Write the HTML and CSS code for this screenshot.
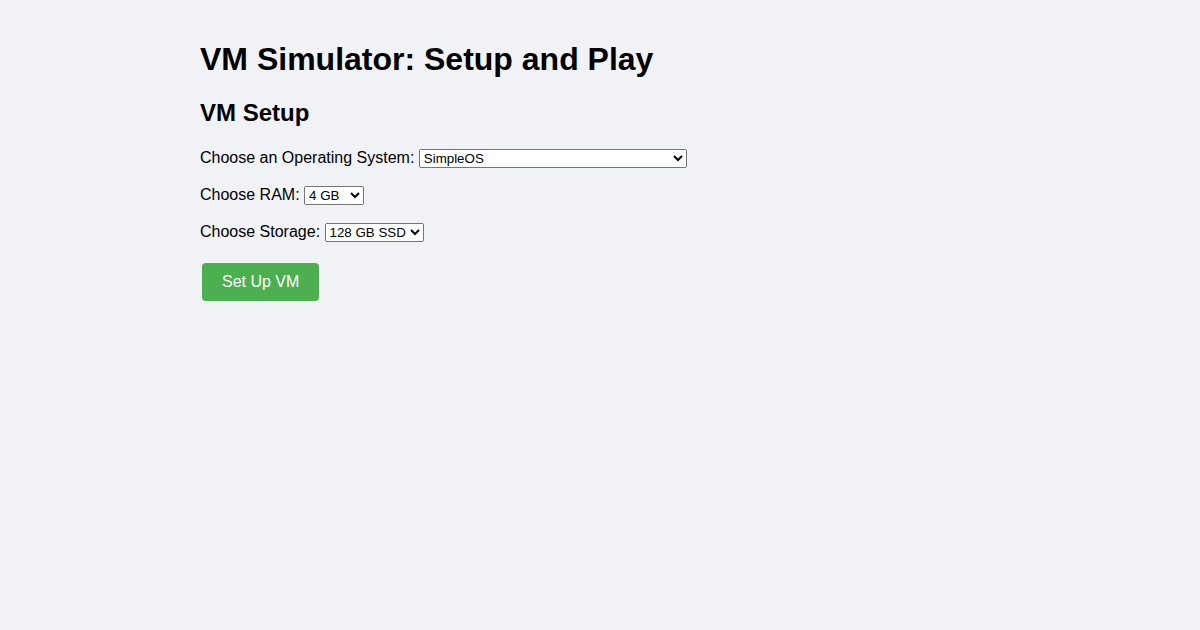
FILE: index.html
```html
<!DOCTYPE html>
<html lang="en">

<head>
    <meta charset="UTF-8">
    <meta name="viewport" content="width=device-width, initial-scale=1.0">
    <title>VM Simulator</title>
    <link rel="stylesheet" href="styles.css">
</head>

<body>
    <div class="container">
        <h1>VM Simulator: Setup and Play</h1>

        <div id="setup">
            <h2>VM Setup</h2>
            <div class="form-row">
                <label for="os">Choose an Operating System:</label>
                <select id="os" class="os-select">
                    <option value="simple">SimpleOS</option>
                    <option value="retro">RetroOS</option>
                    <option value="modern">ModernOS</option>
                </select>
            </div>
            <div class="form-row">
                <label for="ram">Choose RAM:</label>
                <select id="ram" class="ram-select">
                    <option value="4">4 GB</option>
                    <option value="8">8 GB</option>
                    <option value="16">16 GB</option>
                </select>
            </div>
            <div class="form-row">
                <label for="storage">Choose Storage:</label>
                <select id="storage">
                    <option value="128">128 GB SSD</option>
                    <option value="256">256 GB SSD</option>
                    <option value="512">512 GB SSD</option>
                </select>
            </div>
            <button id="setupBtn" class="btn">Set Up VM</button>
        </div>
    </div>
</body>

</html>
```

FILE: styles.css
```css
body {
    font-family: "Liberation Sans", Arial, sans-serif;
    background-color: #f1f2f6;
    margin: 0;
    padding: 20px;
    color: #000;
}

.container {
    max-width: 800px;
    margin: 0 auto;
}

h1 {
    font-size: 32px;
    margin: 21px 0;
}

h2 {
    font-size: 24px;
    margin: 20px 0 22px;
}

/* form rows */
.form-row {
    margin-bottom: 18px;
    font-size: 16px;
}

.os-select {
    width: 268px;
}

.ram-select {
    width: 60px;
}

/* button */
.btn {
    background-color: #4caf50;
    color: #fff;
    border: none;
    border-radius: 4px;
    padding: 10px 20px;
    font-family: "Liberation Sans", Arial, sans-serif;
    font-size: 16px;
    margin: 3px 2px;
    cursor: pointer;
}
```
